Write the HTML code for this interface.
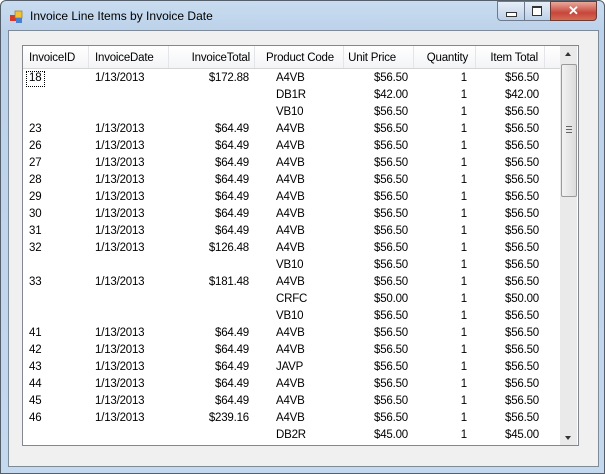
<!DOCTYPE html>
<html><head><style>
body{margin:0;width:605px;height:474px;overflow:hidden;font-family:"Liberation Sans",sans-serif;background:#fff}
.win{position:absolute;left:0;top:0;width:603px;height:472px;border:1px solid #555e6b;border-radius:6px 6px 0 0;background:linear-gradient(#c9dcf0,#bcd2ea 30px,#c4d8ee);}
.title{position:absolute;left:29px;top:8px;font-size:12px;color:#000}
.client{position:absolute;left:7px;top:29px;width:589px;height:435px;background:#f0f0f0;border:1px solid #7f8a99}
.grid{position:absolute;left:21px;top:44px;width:555px;height:399px;background:#fff;border:1px solid #828790;overflow:hidden}
.hdr{position:absolute;left:0;top:0;width:537px;height:22px;background:linear-gradient(#fff,#f3f4f6);border-bottom:1px solid #d5d5d5}
.c{position:absolute;font-size:11.5px;color:#000;white-space:nowrap;letter-spacing:-0.2px}
.sep{position:absolute;top:0;width:1px;height:22px;background:#e3e5e8}
.sb{position:absolute;left:537px;top:0;width:17px;height:399px;background:#eaeaea}
.thumb{position:absolute;left:1px;top:18px;width:14px;height:131px;border:1px solid #9a9a9a;border-radius:2px;background:linear-gradient(90deg,#f2f2f2,#dcdcdc)}
.btns{position:absolute;left:496px;top:0;width:101px;height:20px}
</style></head><body>
<div class="win">
<svg style="position:absolute;left:9px;top:9px" width="14" height="14"><rect x="0" y="5" width="6" height="6" fill="#d63a2a"/><rect x="5" y="1" width="7" height="7" fill="#f2c136" stroke="#a07a10" stroke-width=".7"/><rect x="6" y="8" width="6" height="5" fill="#4a7fd0"/></svg>
<div class="title">Invoice Line Items by Invoice Date</div>
<div class="btns">
<div style="position:absolute;left:0;top:0;width:26px;height:18px;border:1px solid #6d7a8c;border-radius:0 0 0 4px;background:linear-gradient(#e6eef8,#bcd0e8)"><div style="position:absolute;left:8px;top:10px;width:9px;height:3px;border:1px solid #333;background:#fff"></div></div>
<div style="position:absolute;left:27px;top:0;width:25px;height:18px;border:1px solid #6d7a8c;background:linear-gradient(#e6eef8,#bcd0e8)"><div style="position:absolute;left:7px;top:4px;width:8px;height:7px;border:1px solid #333;border-top-width:2px;background:#fff"></div></div>
<div style="position:absolute;left:53px;top:0;width:45px;height:18px;border:1px solid #6d3a34;border-radius:0 0 4px 0;background:linear-gradient(#e9a99c,#c7463a 60%,#d46a55);color:#fff;font-weight:bold;font-size:13px;text-align:center;line-height:17px">✕</div>
</div>
<div class="client"></div>
<div class="grid">
<div class="hdr">
<div class="c" style="left:6px;top:6px">InvoiceID</div>
<div class="sep" style="left:65px"></div>
<div class="c" style="left:72px;top:6px">InvoiceDate</div>
<div class="sep" style="left:145px"></div>
<div class="c" style="right:310px;top:6px">InvoiceTotal</div>
<div class="sep" style="left:231px"></div>
<div class="c" style="left:243px;top:6px">Product Code</div>
<div class="sep" style="left:320px"></div>
<div class="c" style="right:164px;top:6px">Unit Price</div>
<div class="sep" style="left:390px"></div>
<div class="c" style="right:92px;top:6px">Quantity</div>
<div class="sep" style="left:452px"></div>
<div class="c" style="right:22px;top:6px">Item Total</div>
<div class="sep" style="left:521px"></div>
</div>
<div id="rows"></div>
<div class="sb">
<div style="position:absolute;left:5px;top:6px;width:0;height:0;border:3px solid transparent;border-bottom:4px solid #333;border-top:0"></div>
<div class="thumb"><div style="position:absolute;left:4px;top:61px;width:6px;height:5px;border-top:1px solid #666;border-bottom:1px solid #666"><div style="margin-top:2px;height:1px;background:#666"></div></div></div>
<div style="position:absolute;left:5px;top:390px;width:0;height:0;border:3px solid transparent;border-top:4px solid #333;border-bottom:0"></div>
</div>
</div>
</div>
<script>
var d=[["18","1/13/2013","$172.88","A4VB","$56.50","$56.50"],["","","","DB1R","$42.00","$42.00"],["","","","VB10","$56.50","$56.50"],
["23","1/13/2013","$64.49","A4VB","$56.50","$56.50"],["26","1/13/2013","$64.49","A4VB","$56.50","$56.50"],["27","1/13/2013","$64.49","A4VB","$56.50","$56.50"],["28","1/13/2013","$64.49","A4VB","$56.50","$56.50"],["29","1/13/2013","$64.49","A4VB","$56.50","$56.50"],["30","1/13/2013","$64.49","A4VB","$56.50","$56.50"],["31","1/13/2013","$64.49","A4VB","$56.50","$56.50"],["32","1/13/2013","$126.48","A4VB","$56.50","$56.50"],["","","","VB10","$56.50","$56.50"],["33","1/13/2013","$181.48","A4VB","$56.50","$56.50"],["","","","CRFC","$50.00","$50.00"],["","","","VB10","$56.50","$56.50"],["41","1/13/2013","$64.49","A4VB","$56.50","$56.50"],["42","1/13/2013","$64.49","A4VB","$56.50","$56.50"],["43","1/13/2013","$64.49","JAVP","$56.50","$56.50"],["44","1/13/2013","$64.49","A4VB","$56.50","$56.50"],["45","1/13/2013","$64.49","A4VB","$56.50","$56.50"],["46","1/13/2013","$239.16","A4VB","$56.50","$56.50"],["","","","DB2R","$45.00","$45.00"]];
var h="";d.forEach(function(r,i){var t=26+i*17;
h+='<div class="c" style="left:6px;top:'+t+'px">'+r[0]+'</div><div class="c" style="left:72px;top:'+t+'px">'+r[1]+'</div><div class="c" style="right:329px;top:'+t+'px">'+r[2]+'</div><div class="c" style="left:253px;top:'+t+'px">'+r[3]+'</div><div class="c" style="right:170px;top:'+t+'px">'+r[4]+'</div><div class="c" style="right:111px;top:'+t+'px">1</div><div class="c" style="right:39px;top:'+t+'px">'+r[5]+'</div>';});
h+='<div style="position:absolute;left:3px;top:25px;width:17px;height:14px;border:1px dotted #000"></div>';
document.getElementById("rows").innerHTML=h;
</script>
</body></html>
